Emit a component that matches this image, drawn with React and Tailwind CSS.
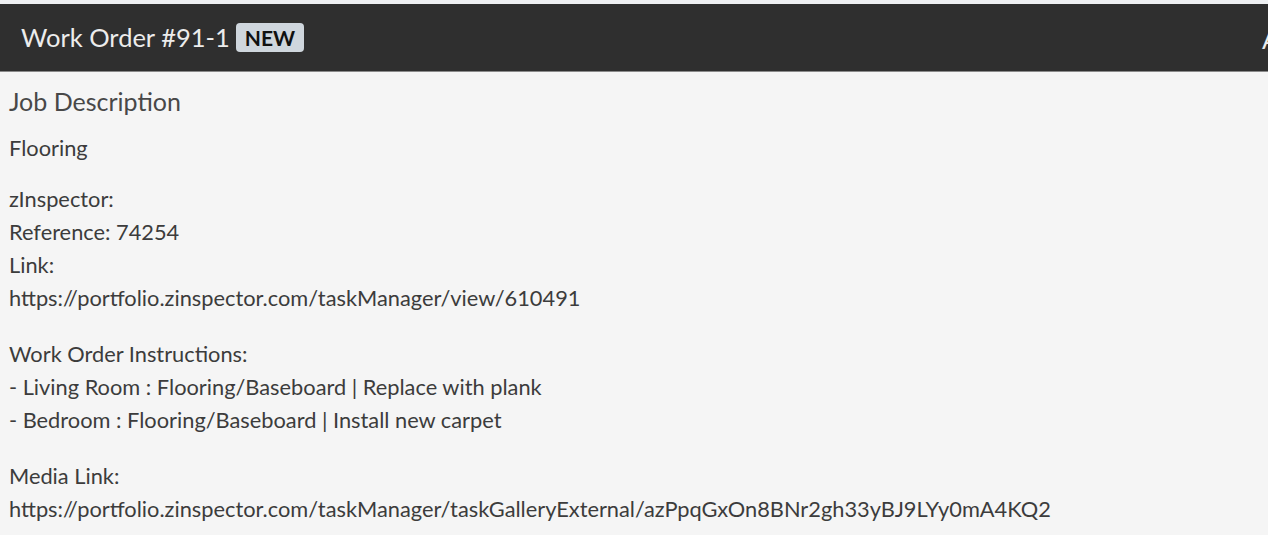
export default function App() {
  const font = { fontFamily: "Lato, 'Noto Sans', sans-serif" };
  return (
    <div className="w-[1268px] h-[535px] overflow-hidden bg-[#f5f5f5]" style={font}>
      <div className="h-[4px] bg-[#eef0f2]" />
      <div className="h-[68px] bg-[#2f2f2f] border-b border-[#8a8a8a] flex items-center pl-[21px] relative overflow-hidden">
        <span className="text-[25.5px] text-[#ececec] leading-none">Work Order #91-1</span>
        <span className="ml-[6px] h-[29px] px-[9px] rounded-[4px] bg-[#cfd6dd] text-[#111] font-bold text-[21px] flex items-center leading-none">NEW</span>
        <span className="absolute left-[1262px] top-[23px] text-[25.5px] text-[#ececec] leading-none">A</span>
      </div>
      <div className="pl-[9px] pt-[13px] text-[#3c3c3c]">
        <div className="text-[25px] leading-[32px] text-[#484848]">Job Description</div>
        <div className="mt-[14px] text-[21.8px] leading-[33px]">
          <p className="mb-[18px]">Flooring</p>
          <p className="mb-[23px]">
            zInspector:<br />
            Reference: 74254<br />
            Link:<br />
            https://portfolio.zinspector.com/taskManager/view/610491
          </p>
          <p className="mb-[23px]">
            Work Order Instructions:<br />
            - Living Room : Flooring/Baseboard | Replace with plank<br />
            - Bedroom : Flooring/Baseboard | Install new carpet
          </p>
          <p>
            Media Link:<br />
            https://portfolio.zinspector.com/taskManager/taskGalleryExternal/azPpqGxOn8BNr2gh33yBJ9LYy0mA4KQ2
          </p>
        </div>
      </div>
    </div>
  );
}
